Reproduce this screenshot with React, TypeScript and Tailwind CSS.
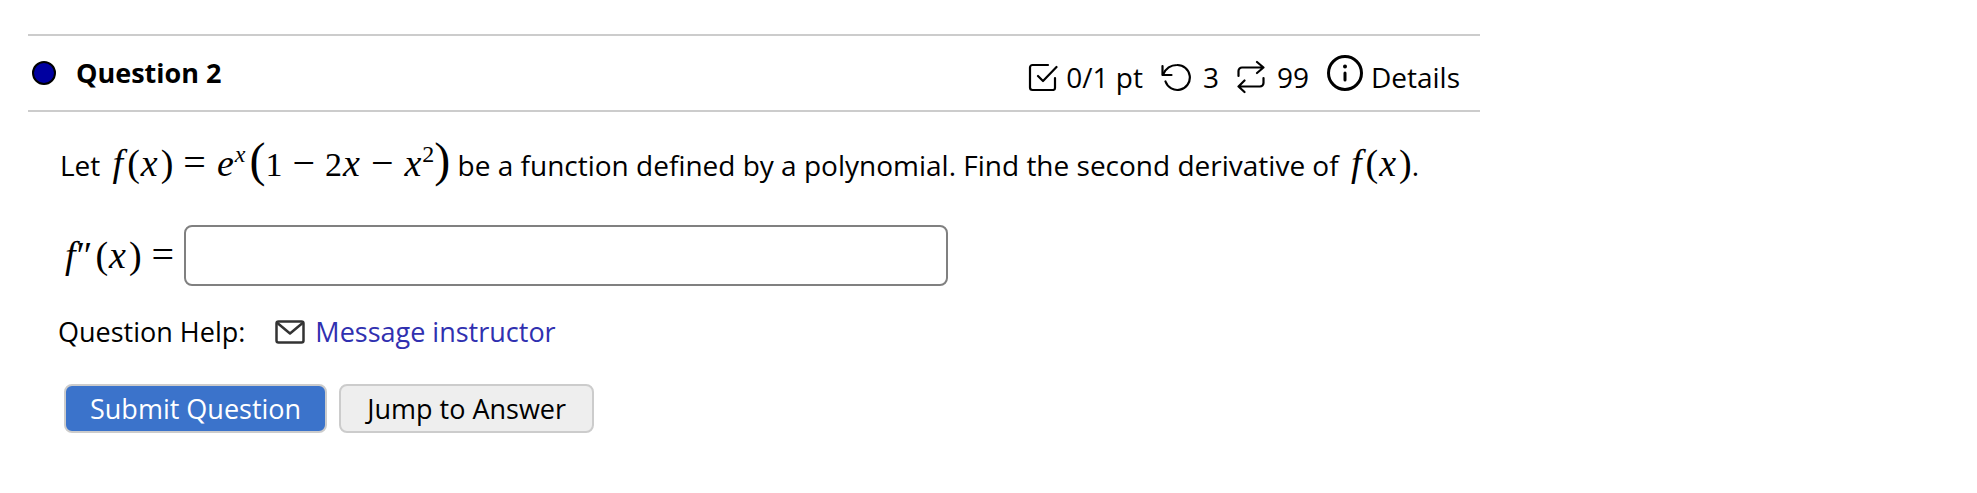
import type { ReactNode } from "react";

const Letter = ({ children }: { children: ReactNode }) => (
  <i className="mx-px text-[38px]">{children}</i>
);

const Op = ({ children }: { children: ReactNode }) => (
  <span className="mx-[10px] text-[40px]">{children}</span>
);

const Sup = ({ children }: { children: ReactNode }) => (
  <span className="relative -top-[14px] text-[24px]">{children}</span>
);

// Serif run of math, kept on one line
const MathText = ({ children }: { children: ReactNode }) => (
  <span className="inline-flex items-baseline whitespace-nowrap font-['Liberation_Serif',serif] text-[34px] leading-none">
    {children}
  </span>
);

// f(x), with optional prime marks
const Fx = ({ primes = "" }: { primes?: string }) => (
  <>
    <span className="ml-1 mr-[3px]">
      <Letter>f</Letter>
      {primes && <span className="text-[38px]">{primes}</span>}
    </span>
    <span className="text-[38px]">(</span>
    <Letter>x</Letter>
    <span className="ml-[2px] text-[38px]">)</span>
  </>
);

const line = {
  fill: "none",
  stroke: "currentColor",
  strokeLinecap: "round",
  strokeLinejoin: "round",
} as const;

const CheckIcon = () => (
  <svg width="30" height="30" viewBox="0 0 30 30" strokeWidth="2.2" {...line} aria-hidden="true">
    <path d="M20 3H4.500A2.500 2.500 0 0 0 2 5.500V25.500A2.500 2.500 0 0 0 4.500 28H25.500A2 2 0 0 0 27 26V16" />
    <path d="M10 14l5 5L28.500 5" />
  </svg>
);

const UndoIcon = () => (
  <svg width="30" height="30" viewBox="0 0 30 30" strokeWidth="2.2" {...line} aria-hidden="true">
    <path d="M1.500 4v9h9" />
    <path d="M2 12.500C5 6 10 3 16 3a12.500 12.500 0 1 1-11.500 16.500" />
  </svg>
);

const RepeatIcon = () => (
  <svg width="28" height="34" viewBox="0 0 28 34" strokeWidth="2.2" {...line} aria-hidden="true">
    <path d="M1.500 16v-5a3.500 3.500 0 0 1 3.500-3.500h21.500M20 2l6.500 5.500L20 13" />
    <path d="M26.500 18v5a3.500 3.500 0 0 1-3.500 3.500H1.500M7.500 20.500L1.500 26.500l6 5.500" />
  </svg>
);

const InfoIcon = () => (
  <svg width="36" height="36" viewBox="0 0 36 36" strokeWidth="3" {...line} aria-hidden="true">
    <circle cx="18" cy="18" r="16.500" />
    <path d="M18 18v7" />
    <circle cx="18" cy="11.500" r="2" fill="currentColor" stroke="none" />
  </svg>
);

const MailIcon = () => (
  <svg className="text-[#333]" width="30" height="24" viewBox="0 0 30 24" strokeWidth="2.5" {...line} aria-hidden="true">
    <rect x="1.500" y="1.500" width="27" height="21" rx="2" />
    <path d="M3 3.500l12 10 12-10" />
  </svg>
);

export default function App() {
  return (
    <main className="mx-7 max-w-[1452px] pt-[34px] font-['Open_Sans',sans-serif] text-[27px] leading-9 text-black">
      <header className="flex items-center justify-between border-y-2 border-[#ccc] py-[11px] pl-1 pr-5">
        <div className="flex items-center gap-5">
          <span className="size-6 rounded-full border-2 border-black bg-[#0000a0]" />
          <h2 className="font-bold">Question 2</h2>
        </div>
        <div className="flex items-center gap-[18px] pt-2 text-[28px]">
          <span className="flex items-center gap-2">
            <CheckIcon />
            0/1 pt
          </span>
          <span className="flex items-center gap-3">
            <UndoIcon />3
          </span>
          <span className="flex items-center gap-3">
            <RepeatIcon />
            99
          </span>
          <button type="button" className="flex items-center gap-2">
            <span className="pb-2">
              <InfoIcon />
            </span>
            Details
          </button>
        </div>
      </header>

      <section className="pl-8">
        <p className="pt-6 text-[28px] leading-[48px]">
          Let{" "}
          <MathText>
            <Fx />
            <Op>=</Op>
            <Letter>e</Letter>
            <Sup>
              <i>x</i>
            </Sup>
            <span className="ml-1 text-[48px]">(</span>
            1<Op>−</Op>2<Letter>x</Letter>
            <Op>−</Op>
            <Letter>x</Letter>
            <Sup>2</Sup>
            <span className="text-[48px]">)</span>
          </MathText>{" "}
          be a function defined by a polynomial. Find the second derivative of{" "}
          <MathText>
            <Fx />
          </MathText>
          .
        </p>

        <div className="flex items-center gap-[10px] pt-9">
          <label htmlFor="answer">
            <MathText>
              <Fx primes="″" />
              <span className="ml-[10px] text-[40px]">=</span>
            </MathText>
          </label>
          <input
            id="answer"
            type="text"
            className="h-[61px] w-full max-w-[764px] rounded-lg border-2 border-[#808080] px-3"
          />
        </div>

        <div className="-ml-[2px] flex items-center pt-7">
          <span>Question Help:</span>
          <a href="#message" className="ml-[30px] flex items-center gap-[10px] text-[#3030b0]">
            <MailIcon />
            Message instructor
          </a>
        </div>

        <div className="ml-1 flex gap-3 pt-[34px]">
          <button
            type="button"
            className="h-[49px] rounded-lg border-2 border-[#ccc] bg-[#3b73cb] px-6 text-white"
          >
            Submit Question
          </button>
          <button type="button" className="h-[49px] rounded-lg border-2 border-[#ccc] bg-[#eee] px-[26px]">
            Jump to Answer
          </button>
        </div>
      </section>
    </main>
  );
}
